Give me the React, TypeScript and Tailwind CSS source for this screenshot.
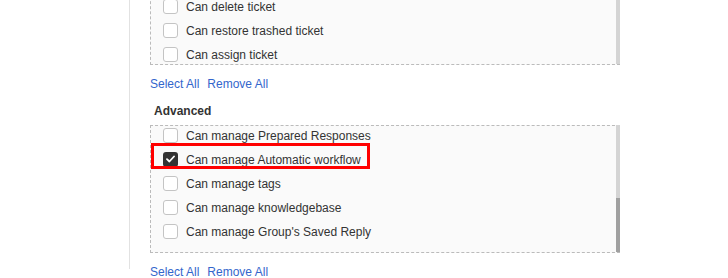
import { useLayoutEffect, useRef } from 'react'

interface Permission {
  label: string
  checked?: boolean
  highlight?: boolean
}

const ticketPerms: Permission[] = [
  { label: 'Can delete ticket' },
  { label: 'Can restore trashed ticket' },
  { label: 'Can assign ticket' },
]

const advancedPerms: Permission[] = [
  { label: 'Can access report' },
  { label: 'Can manage users' },
  { label: 'Can manage organizations' },
  { label: 'Can manage departments' },
  { label: 'Can manage teams' },
  { label: 'Can manage emails' },
  { label: 'Can manage SLA plans' },
  { label: 'Can manage Prepared Responses' },
  { label: 'Can manage Automatic workflow', checked: true, highlight: true },
  { label: 'Can manage tags' },
  { label: 'Can manage knowledgebase' },
  { label: "Can manage Group's Saved Reply" },
]

function Checkbox({ checked }: { checked?: boolean }) {
  if (checked) {
    return (
      <span className="flex h-[15px] w-[15px] shrink-0 items-center justify-center rounded-[3px] bg-[#333]">
        <svg width="9" height="8" viewBox="0 0 9 8" fill="none">
          <path d="M1 4.2L3.4 6.5L8 1.5" stroke="white" strokeWidth="1.8" strokeLinecap="round" strokeLinejoin="round" />
        </svg>
      </span>
    )
  }
  return <span className="h-[15px] w-[15px] shrink-0 rounded-[3px] border border-[#c4c4c4] bg-white" />
}

function PermRow({ perm }: { perm: Permission }) {
  return (
    <div className="relative flex h-6 items-center gap-2 pl-3">
      <Checkbox checked={perm.checked} />
      <span className="whitespace-nowrap pt-[2px]">{perm.label}</span>
      {perm.highlight && (
        <span className="pointer-events-none absolute left-0 top-[-4px] h-[26px] w-[219px] border-[3px] border-[#ff0000]" />
      )}
    </div>
  )
}

// fake scrollbar drawn over the right edge of a list box
function Scrollbar({ thumb }: { thumb?: string }) {
  return (
    <div className="absolute -top-px bottom-0 right-0 flex w-[4px] flex-col justify-end bg-[#d4d4d4]">
      {thumb && <div className={`w-full bg-[#a0a0a0] ${thumb}`} />}
    </div>
  )
}

function Links({ className }: { className: string }) {
  return (
    <div className={`flex gap-2 leading-[17px] text-[#3366cc] ${className}`}>
      <a href="#">Select All</a>
      <a href="#">Remove All</a>
    </div>
  )
}

const boxClass = 'relative w-[470px] border border-r-0 border-dashed border-[#bbbbbb] bg-[#fafafa]'

export default function App() {
  const advRef = useRef<HTMLDivElement>(null)

  useLayoutEffect(() => {
    const el = advRef.current
    if (el) el.scrollTop = el.scrollHeight
  }, [])

  return (
    <div className="h-[278px] w-[728px] overflow-hidden bg-white font-['Liberation_Sans',Arial,sans-serif] text-[12px] text-[#333]">
      <div className="ml-[129px] h-full border-l border-[#e2e2e2] pl-5">
        {/* Ticket permissions (scrolled off the top) */}
        <div className={`-mt-[9px] ${boxClass}`}>
          <div className="h-[72px] overflow-hidden pt-[2px]">
            {ticketPerms.map((p) => (
              <PermRow key={p.label} perm={p} />
            ))}
          </div>
          <Scrollbar />
        </div>
        <Links className="mt-[11px]" />

        <div className="mt-[10px] pl-1 font-bold leading-[17px]">Advanced</div>

        <div className={`mt-[5px] ${boxClass}`}>
          <div ref={advRef} className="h-[126px] overflow-hidden pb-[9px]">
            {advancedPerms.map((p) => (
              <PermRow key={p.label} perm={p} />
            ))}
          </div>
          <Scrollbar thumb="h-[54px]" />
        </div>
        <Links className="mt-[11px]" />
      </div>
    </div>
  )
}
